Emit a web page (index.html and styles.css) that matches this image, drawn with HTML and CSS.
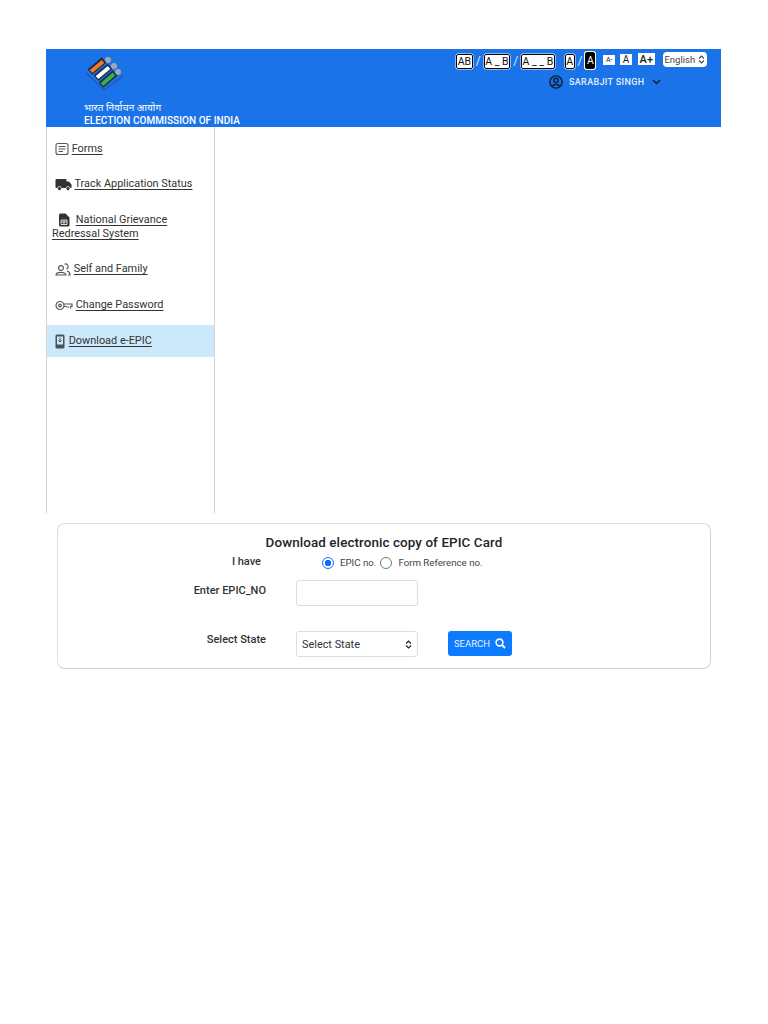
FILE: index.html
```html
<!DOCTYPE html>
<html>
<head>
  <title>Download e-EPIC</title>
  <link rel="stylesheet" href="styles.css">
</head>
<body>
  <div class="page">
    <header class="topbar">
      <div class="brand">
        <svg class="eci-logo" width="37" height="34" viewBox="0 0 37 34">
          <path d="M0 16 L18 33 L37 19" fill="none" stroke="#2c55a8" stroke-width="1.4"/>
          <circle cx="22" cy="3" r="3" fill="#a3a6ab"/>
          <circle cx="28" cy="9" r="3" fill="#a3a6ab"/>
          <circle cx="32" cy="15" r="3" fill="#a3a6ab"/>
          <path d="M4 15 L18 3" stroke="#1c2a4a" stroke-width="7"/>
          <path d="M5 14.5 L17 4.5" stroke="#f47b20" stroke-width="4"/>
          <path d="M10 21 L24 9.5" stroke="#1c2a4a" stroke-width="7"/>
          <path d="M11 20.5 L23 10.5" stroke="#fff" stroke-width="4"/>
          <path d="M15 28 L29 16" stroke="#1c2a4a" stroke-width="7"/>
          <path d="M16 27.5 L28 17" stroke="#3fae49" stroke-width="4"/>
        </svg>
        <div class="brand-hi">भारत निर्वाचन आयोग</div>
        <div class="brand-en">ELECTION COMMISSION OF INDIA</div>
      </div>
      <div class="tools">
        <div class="tool-row">
          <span class="tk tk-ab">AB</span><span class="sep">/</span>
          <span class="tk tk-a1b">A _ B</span><span class="sep">/</span>
          <span class="tk tk-a2b">A _ _ B</span>
          <span class="tk tk-gap">A</span><span class="sep">/</span>
          <span class="tk tk-dark">A</span>
          <span class="sz sz-s">A-</span>
          <span class="sz sz-m">A</span>
          <span class="sz sz-l">A+</span>
          <span class="lang">English
            <svg width="7" height="9" viewBox="0 0 7 9"><path d="M1 3.5 L3.5 1 L6 3.5 M1 5.5 L3.5 8 L6 5.5" fill="none" stroke="#444" stroke-width="1.1"/></svg>
          </span>
        </div>
        <div class="user-row">
          <svg width="14" height="14" viewBox="0 0 16 16" fill="none" stroke="#10203a" stroke-width="1.7">
            <circle cx="8" cy="8" r="7"/><circle cx="8" cy="6.2" r="2.5"/><path d="M3.5 13 C5 10 11 10 12.5 13"/>
          </svg>
          <span class="user-name">SARABJIT SINGH</span>
          <svg width="9" height="6" viewBox="0 0 9 6"><path d="M1 1 L4.5 4.5 L8 1" fill="none" stroke="#10203a" stroke-width="1.5"/></svg>
        </div>
      </div>
    </header>

    <div class="main">
      <nav class="sidebar">
        <a class="nav-item nav-forms" href="#">
          <svg width="14" height="14" viewBox="0 0 14 14" fill="none" stroke="#555" stroke-width="1.1"><rect x="1" y="1.5" width="12" height="11" rx="2"/><path d="M3.5 4.5 H10.5 M3.5 7 H10.5 M3.5 9.5 H8"/></svg>
          <span class="nav-link">Forms</span>
        </a>
        <a class="nav-item nav-track" href="#">
          <svg width="17" height="13" viewBox="0 0 17 13" fill="#333"><path d="M1.5 1 H10.5 A1 1 0 0 1 11.5 2 V3.5 H14 L16.5 6.5 V10 H1.5 A1 1 0 0 1 .5 9 V2 A1 1 0 0 1 1.5 1 Z"/><circle cx="4.5" cy="10.5" r="2" stroke="#fff" stroke-width=".7"/><circle cx="13" cy="10.5" r="2" stroke="#fff" stroke-width=".7"/></svg>
          <span class="nav-link">Track Application Status</span>
        </a>
        <a class="nav-item nav-griev" href="#">
          <svg class="griev-icon" width="12" height="14" viewBox="0 0 12 14"><path d="M1 2 A1.5 1.5 0 0 1 2.5 .5 H7.5 L11.5 4.5 V12 A1.5 1.5 0 0 1 10 13.5 H2.5 A1.5 1.5 0 0 1 1 12 Z" fill="#333"/><path d="M3 7 H9 V11.5 H3 Z M6 7 V11.5 M3 9 H9" fill="none" stroke="#fff" stroke-width=".8"/></svg>
          <span class="nav-link">National Grievance</span><br><span class="nav-link">Redressal System</span>
        </a>
        <a class="nav-item nav-self" href="#">
          <svg width="16" height="13" viewBox="0 0 16 13" fill="none" stroke="#555" stroke-width="1.1"><circle cx="6" cy="5" r="2.4"/><path d="M1 12 C1 8.5 11 8.5 11 12 Z"/><path d="M9.5 1.2 A2.4 2.4 0 0 1 11.5 6 M12 8 C14 8.5 15 10 15 12 H13"/></svg>
          <span class="nav-link">Self and Family</span>
        </a>
        <a class="nav-item nav-pass" href="#">
          <svg width="18" height="11" viewBox="0 0 18 11" fill="none" stroke="#555" stroke-width="1.2"><circle cx="5" cy="5.5" r="4"/><circle cx="5" cy="5.5" r="1.3"/><path d="M9 4 H17 V6.5 H15.5 V8.5 M13 6.5 V8 M9 6.5 H12"/></svg>
          <span class="nav-link">Change Password</span>
        </a>
        <a class="nav-item nav-epic" href="#">
          <svg class="epic-icon" width="10" height="15" viewBox="0 0 10 15"><rect x=".5" y=".5" width="9" height="14" rx="1.6" fill="#47535c"/><rect x="2" y="2.5" width="6" height="8" fill="#cfe9fb"/><path d="M5 3.5 V8 M3.3 6.3 L5 8 L6.7 6.3" fill="none" stroke="#47535c" stroke-width="1"/></svg>
          <span class="nav-link">Download e-EPIC</span>
        </a>
      </nav>
      <div class="content"></div>
    </div>

    <section class="card">
      <h1 class="card-title">Download electronic copy of EPIC Card</h1>
      <div class="form-row row-have">
        <div class="label label-have">I have</div>
        <div class="radios">
          <span class="radio radio-on"></span><span class="radio-text">EPIC no.</span>
          <span class="radio"></span><span class="radio-text">Form Reference no.</span>
        </div>
      </div>
      <div class="form-row row-epic">
        <div class="label">Enter EPIC_NO</div>
        <input class="field" type="text">
      </div>
      <div class="form-row row-state">
        <div class="label">Select State</div>
        <div class="field select-field">Select State
          <svg width="7" height="9" viewBox="0 0 7 9"><path d="M1 3.5 L3.5 1 L6 3.5 M1 5.5 L3.5 8 L6 5.5" fill="none" stroke="#222" stroke-width="1.2"/></svg>
        </div>
        <button class="search-btn" type="button">SEARCH
          <svg width="11" height="11" viewBox="0 0 11 11"><circle cx="4.5" cy="4.5" r="3.4" fill="none" stroke="#fff" stroke-width="1.6"/><path d="M7 7 L10 10" stroke="#fff" stroke-width="1.8"/></svg>
        </button>
      </div>
    </section>
  </div>
</body>
</html>
```

FILE: styles.css
```css
body {
  margin: 0;
  background-color: #fff;
  font-family: Roboto, "Liberation Sans", sans-serif;
  color: #212529;
}

.page {
  padding: 49px 47px 0 46px;
}

.topbar {
  display: flex;
  justify-content: space-between;
  height: 78px;
  background-color: #1a73e8;
  color: #fff;
}

.brand {
  padding: 8px 0 0 38px;
}

.eci-logo {
  display: block;
  margin-left: 2px;
}

.brand-hi {
  margin-top: 9px;
  font-family: "Noto Sans", "Liberation Serif", serif;
  font-size: 10px;
  line-height: 14px;
}

.brand-en {
  font-size: 10px;
  line-height: 13px;
  font-weight: 500;
  letter-spacing: .05px;
}

.tools {
  width: 251px;
  margin-right: 14px;
  padding-top: 3px;
}

.tool-row {
  display: flex;
  align-items: flex-end;
  height: 17px;
}

.tk {
  box-sizing: border-box;
  height: 15px;
  border: 1px solid #000;
  border-radius: 2px;
  background-color: #fff;
  color: #111;
  font-size: 10.5px;
  line-height: 13px;
  text-align: center;
  white-space: nowrap;
  box-shadow: 0 0 0 .5px #fff;
}

.tk-ab {
  width: 17px;
}

.tk-a1b {
  width: 27px;
}

.tk-a2b {
  width: 34px;
}

.tk-gap {
  width: 10px;
  margin-left: 10px;
}

.tk-dark {
  width: 10px;
  height: 17px;
  line-height: 15px;
  background-color: #000;
  color: #fff;
  box-shadow: 0 0 0 1px #fff;
}

.sep {
  width: 11px;
  height: 15px;
  text-align: center;
  color: #dfe9fa;
  font-size: 12px;
  line-height: 15px;
}

.sz {
  display: flex;
  align-items: center;
  justify-content: center;
  margin-bottom: 4px;
  background-color: #fff;
  color: #222;
}

.sz-s {
  width: 12px;
  height: 10px;
  margin-left: 8px;
  font-size: 7px;
}

.sz-m {
  width: 12px;
  height: 11px;
  margin-left: 5px;
  font-size: 10px;
}

.sz-l {
  width: 17px;
  height: 12px;
  margin-left: 6px;
  font-size: 11px;
  font-weight: 500;
}

.lang {
  box-sizing: border-box;
  display: flex;
  align-items: center;
  align-self: flex-start;
  justify-content: center;
  gap: 3px;
  width: 45px;
  height: 15px;
  margin-left: 8px;
  border-radius: 4px;
  background-color: #fff;
  color: #444;
  font-size: 9.5px;
}

.user-row {
  display: flex;
  align-items: center;
  margin: 5px 0 0 93px;
  height: 15px;
}

.user-name {
  margin: 0 8px 0 6px;
  font-size: 9px;
  font-weight: 500;
  letter-spacing: .35px;
  color: #e4eefc;
}

.main {
  display: flex;
  height: 386px;
}

.sidebar {
  box-sizing: border-box;
  width: 169px;
  border-left: 1px solid #d4d4d4;
  border-right: 1px solid #d4d4d4;
}

.nav-item {
  display: block;
  padding-left: 8px;
  font-size: 10.9px;
  line-height: 14px;
  color: #333;
  text-decoration: none;
}

.nav-item svg {
  vertical-align: middle;
}

.nav-link {
  color: #333;
  text-decoration: underline;
  text-underline-offset: 1.5px;
}

.nav-forms {
  padding-top: 15px;
}

.nav-track {
  padding-top: 21px;
}

.nav-griev {
  padding: 22px 0 0 5px;
}

.griev-icon {
  margin-left: 6px;
  margin-right: 3px;
}

.nav-self {
  padding-top: 21px;
}

.nav-pass {
  padding-top: 22px;
}

.nav-epic {
  margin-top: 13px;
  height: 32px;
  line-height: 32px;
  background-color: #cce9fc;
}

.epic-icon {
  margin-right: 1px;
}

.content {
  flex: 1;
}

.card {
  box-sizing: border-box;
  height: 146px;
  margin: 10px 10px 0 11px;
  padding-top: 11px;
  border: 1px solid #dcdee0;
  border-right-color: #cfd1d3;
  border-bottom-color: #cfd1d3;
  border-radius: 8px;
}

.card-title {
  margin: 0;
  text-align: center;
  font-size: 13.4px;
  line-height: 16px;
  font-weight: 500;
  letter-spacing: .1px;
}

.form-row {
  display: flex;
}

.label {
  width: 208px;
  text-align: right;
  font-size: 11px;
  line-height: 14px;
  font-weight: 500;
  color: #333;
}

.row-have {
  align-items: flex-start;
  height: 29px;
}

.label-have {
  width: 203px;
  margin-top: 4px;
}

.radios {
  display: flex;
  align-items: center;
  height: 13px;
  margin: 5px 0 0 61px;
  font-size: 9.7px;
  color: #444;
}

.radio {
  box-sizing: border-box;
  width: 12px;
  height: 12px;
  border: 1px solid #777;
  border-radius: 50%;
}

.radio-on {
  border-color: #0d6efd;
  background: radial-gradient(circle, #0d6efd 0 3px, #fff 3.5px);
}

.radio-text {
  margin: 0 4px 0 6px;
}

.row-epic {
  height: 51px;
}

.row-epic .label {
  margin-top: 4px;
}

.field {
  box-sizing: border-box;
  width: 122px;
  height: 26px;
  margin: 0 0 0 30px;
  border: 1px solid #dadde1;
  border-radius: 3px;
  background-color: #fff;
}

.row-state .label {
  margin-top: 2px;
}

.select-field {
  display: flex;
  align-items: center;
  justify-content: space-between;
  padding: 0 5px;
  font-size: 10.9px;
  color: #333;
}

.search-btn {
  display: flex;
  align-items: center;
  justify-content: center;
  gap: 5px;
  width: 64px;
  height: 25px;
  margin-left: 30px;
  padding: 0 0 1px;
  border: none;
  border-radius: 3px;
  background-color: #0d7bff;
  color: #e8f2ff;
  font-family: inherit;
  font-size: 9.5px;
}
```
